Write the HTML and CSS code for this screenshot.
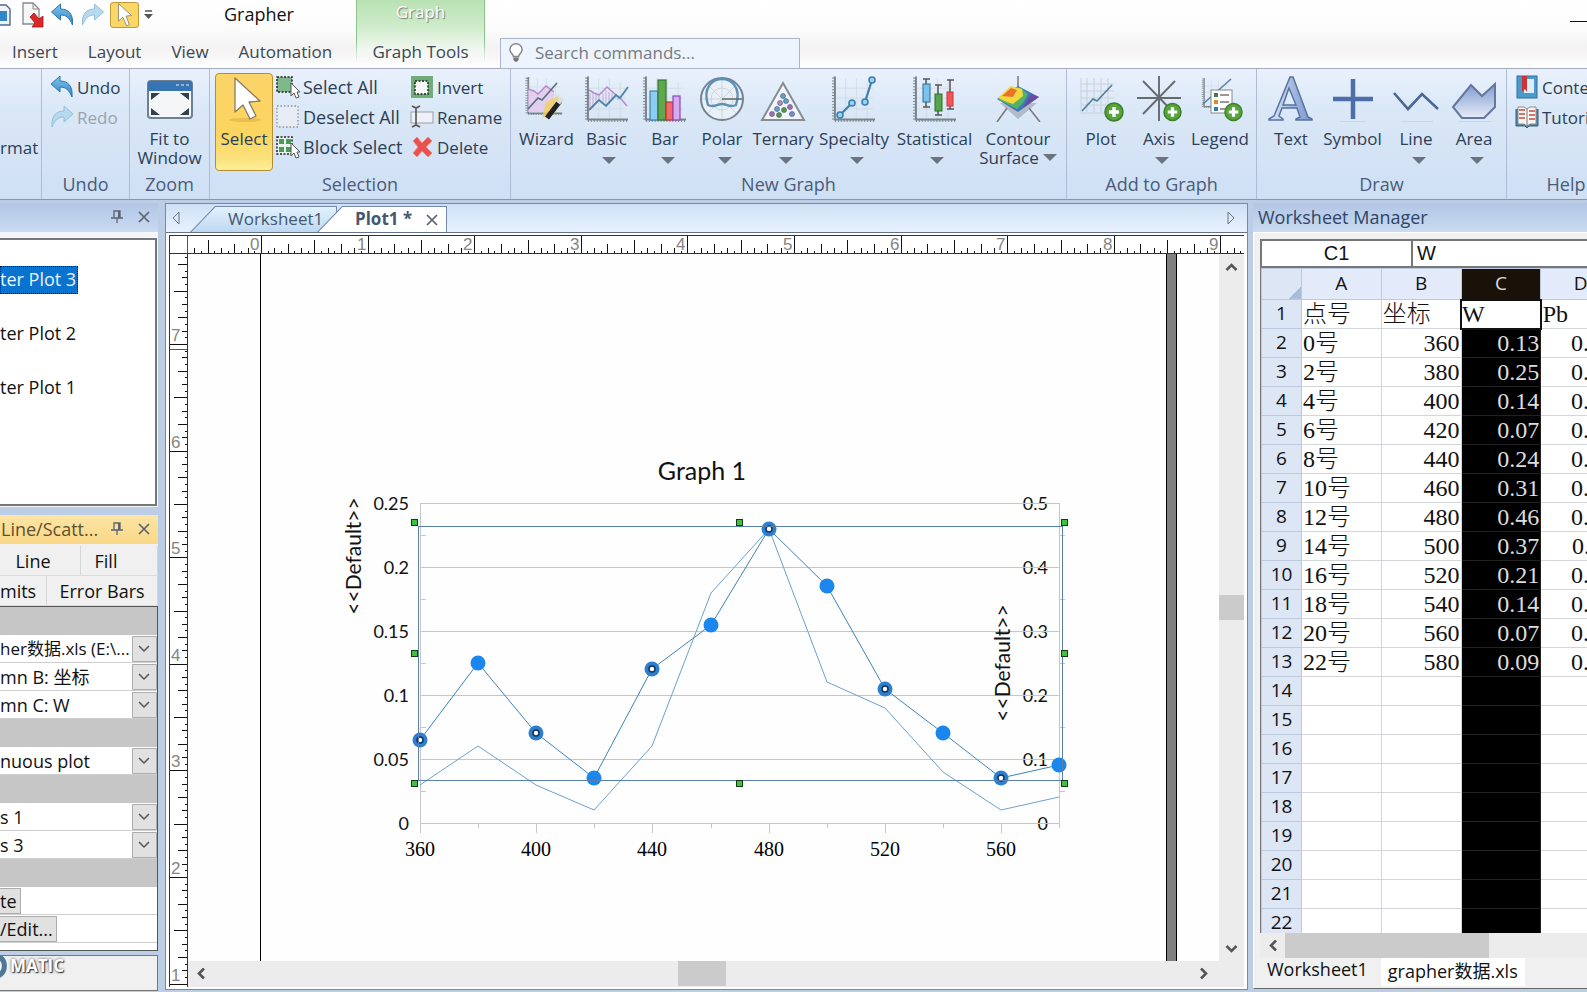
FILE: index.html
```
<!DOCTYPE html>
<html lang="en">
<head>
    <meta charset="UTF-8">
    <title>Grapher</title>
    <link rel="stylesheet" href="styles.css">
</head>
<body>
    <!-- shared shapes -->
    <svg class="defs" width="0" height="0" aria-hidden="true">
        <defs>
            <linearGradient id="blueFill" x1="0" y1="0" x2="0" y2="1">
                <stop offset="0" stop-color="#7fc4ea"/>
                <stop offset="1" stop-color="#2f86c4"/>
            </linearGradient>
            <linearGradient id="areaFill" x1="0" y1="0" x2="0" y2="1">
                <stop offset="0" stop-color="#7f9ad0"/>
                <stop offset="1" stop-color="#e8ecf8"/>
            </linearGradient>
            <linearGradient id="textFill" x1="0" y1="0" x2="1" y2="0">
                <stop offset="0" stop-color="#dbe5f6"/>
                <stop offset="1" stop-color="#7795cf"/>
            </linearGradient>
            <symbol id="undo" viewBox="0 0 24 24">
                <path d="M1 9 L10 1 V6 C18 6 23 11 22 22 C19 15 16 12 10 12 V17 Z" fill="url(#blueFill)" stroke="#2b76ad" stroke-width="1"/>
            </symbol>
            <symbol id="redo" viewBox="0 0 24 24">
                <path d="M23 9 L14 1 V6 C6 6 1 11 2 22 C5 15 8 12 14 12 V17 Z" fill="#b5d9ee" stroke="#95c0dc" stroke-width="1"/>
            </symbol>
            <symbol id="cursor" viewBox="0 0 28 44">
                <path d="M2 1 L2 33 L10 26 L17 42 L22 40 L16 24 L26 23 Z" fill="#fff" stroke="#8a8378" stroke-width="1.6" stroke-linejoin="round"/>
            </symbol>
            <symbol id="axes" viewBox="0 0 44 46">
                <path d="M14 2V44M25 2V44M36 6V44M4 12H42M4 22H42M4 33H42" stroke="#d3dce6" fill="none"/>
                <path d="M3 0V44H44" fill="none" stroke="#7b838b" stroke-width="2"/>
                <path d="M1 1V44" stroke="#7b838b" stroke-width="3" stroke-dasharray="1 2"/>
                <path d="M3 45H44" stroke="#7b838b" stroke-width="3" stroke-dasharray="1 2"/>
            </symbol>
            <symbol id="plus" viewBox="0 0 20 20">
                <circle cx="10" cy="10" r="9" fill="#57a53a" stroke="#3f7d2b" stroke-width="1.5"/>
                <path d="M10 5V15M5 10H15" stroke="#fff" stroke-width="3.4"/>
            </symbol>
            <symbol id="pin" viewBox="0 0 12 14">
                <path d="M3 8V1H9V8M0 8H12M6 8V13" fill="none" stroke="#5a6470" stroke-width="1.3"/>
                <path d="M8 1V8" stroke="#5a6470" stroke-width="2"/>
            </symbol>
            <symbol id="close" viewBox="0 0 12 12">
                <path d="M1 1L11 11M11 1L1 11" fill="none" stroke="#5a6470" stroke-width="1.7"/>
            </symbol>
            <symbol id="chev" viewBox="0 0 12 12">
                <path d="M1 9L6 4L11 9" fill="none" stroke="#555" stroke-width="2.6"/>
            </symbol>
        </defs>
    </svg>

    <header class="titlebar">
        <div class="window-col">
            <div class="quick">
                <button aria-label="Save"><svg width="14" height="24" viewBox="0 0 14 24"><path d="M0 2H6L10 6V22H0" fill="#eef4fa" stroke="#50698a" stroke-width="1.4"/><path d="M0 8H7V18H0" fill="#2f86c8"/></svg></button>
                <button aria-label="Export"><svg width="24" height="26" viewBox="0 0 24 26"><path d="M2 1H12L18 7V22H2Z" fill="#f6f6f8" stroke="#85888f" stroke-width="1.3"/><path d="M12 1V7H18" fill="none" stroke="#85888f"/><path d="M9 15L13 11L18 17L22 14V25H11L14 21Z" fill="#dc2727" stroke="#9f1818" stroke-width=".8"/></svg></button>
                <button aria-label="Undo"><svg width="25" height="24"><use href="#undo"/></svg></button>
                <button aria-label="Redo"><svg width="25" height="24"><use href="#redo"/></svg></button>
                <button class="active" aria-label="Select"><svg width="18" height="24"><use href="#cursor"/></svg></button>
                <button aria-label="More"><svg width="9" height="10" viewBox="0 0 9 10"><path d="M1 1H8" stroke="#555" stroke-width="1.5"/><path d="M0 4H9L4.500 9Z" fill="#555"/></svg></button>
            </div>
            <nav class="tabs">
                <a href="#insert">Insert</a>
                <a href="#layout">Layout</a>
                <a href="#view">View</a>
                <a href="#automation">Automation</a>
            </nav>
        </div>
        <div class="app-name">Grapher</div>
        <div class="context-tab">
            <span>Graph</span>
            <a href="#tools">Graph Tools</a>
        </div>
        <label class="search">
            <svg width="14" height="20" viewBox="0 0 16 22"><path d="M5 15C5 12 1 11 1 7A7 6.500 0 0 1 15 7C15 11 11 12 11 15Z" fill="#fff" stroke="#888" stroke-width="1.7"/><path d="M5 16H11V19L9 21H7L5 19Z" fill="#777"/></svg>
            <input type="text" placeholder="Search commands..." aria-label="Search commands">
        </label>
        <button class="minimize" aria-label="Minimize"></button>
    </header>

    <section class="ribbon">
        <div class="group g-format">
            <div class="items"><span class="cut">rmat</span></div>
        </div>
        <div class="group g-undo">
            <div class="items rows">
                <button><svg width="24" height="24"><use href="#undo"/></svg>Undo</button>
                <button disabled><svg width="24" height="24"><use href="#redo"/></svg>Redo</button>
            </div>
            <h2>Undo</h2>
        </div>
        <div class="group g-zoom">
            <div class="items">
                <button class="big">
                    <svg width="46" height="46" viewBox="0 0 46 46"><rect x="1" y="5" width="44" height="37" rx="3" fill="#f8fafc" stroke="#6d7f93" stroke-width="2"/><path d="M1 15V8Q1 5 4 5H42Q45 5 45 8V15Z" fill="#3774b4"/><path d="M29 9H42" stroke="#a9c9e8" stroke-width="1.500" stroke-dasharray="3 2"/><rect x="3" y="15" width="40" height="25" fill="#f4f6f8"/><path d="M4 17H13L4 24ZM42 17H33L42 24ZM4 39H13L4 32ZM42 39H33L42 32Z" fill="#35404d"/></svg>
                    <span>Fit to<br>Window</span>
                </button>
            </div>
            <h2>Zoom</h2>
        </div>
        <div class="group g-selection">
            <div class="items">
                <button class="big active">
                    <svg width="46" height="46" viewBox="0 0 46 46"><ellipse cx="24" cy="44" rx="16" ry="2" fill="#d9a93a" opacity=".5"/><path d="M14 2V36L22 29L29 43L35 40L28 26L39 25Z" fill="#fff" stroke="#8a7a60" stroke-width="1.300" stroke-linejoin="round"/></svg>
                    <span>Select</span>
                </button>
                <div class="rows">
                    <button><svg width="24" height="24" viewBox="0 0 24 24"><rect x="1" y="2" width="15" height="15" fill="#7db98b" stroke="#222" stroke-width="1.500" stroke-dasharray="2 1.500"/><path d="M15 8V21L18 18L20 23L23 22L21 17H24Z" fill="#fff" stroke="#555"/></svg>Select All</button>
                    <button><svg width="24" height="24" viewBox="0 0 24 24"><rect x="1" y="1" width="21" height="21" fill="#e8edf5" stroke="#8b8f98" stroke-width="1.300" stroke-dasharray="1.500 2"/></svg>Deselect All</button>
                    <button><svg width="24" height="24" viewBox="0 0 24 24"><rect x="1" y="2" width="15" height="17" fill="#eaf3ec" stroke="#222" stroke-width="1.500" stroke-dasharray="2 1.500"/><path d="M3 4H8V9H3ZM10 4H15V9H10ZM3 12H8V17H3ZM10 12H15V17H10Z" fill="#4b9a55"/><path d="M15 8V21L18 18L20 23L23 22L21 17H24Z" fill="#fff" stroke="#555"/></svg>Block Select</button>
                </div>
                <div class="rows">
                    <button><svg width="24" height="24" viewBox="0 0 24 24"><rect x="1" y="1" width="22" height="22" fill="#6fae78"/><rect x="5" y="6" width="13" height="13" fill="#f7faf7" stroke="#222" stroke-width="1.500" stroke-dasharray="2 1.500"/></svg>Invert</button>
                    <button><svg width="24" height="24" viewBox="0 0 24 24"><rect x="1" y="7" width="22" height="11" fill="#eef1f6" stroke="#9a9fa8"/><path d="M2 1L6 3L10 1M6 3V20M2 22L6 20L10 22" fill="none" stroke="#555" stroke-width="1.600"/></svg>Rename</button>
                    <button><svg width="24" height="24" viewBox="0 0 24 24"><path d="M3 6L7 2L12 8L18 2L22 6L16 12L22 18L18 22L12 16L7 22L3 18L8 12Z" fill="#e9504e" stroke="#f08b88"/></svg>Delete</button>
                </div>
            </div>
            <h2>Selection</h2>
        </div>
        <div class="group g-new">
            <div class="items">
                <button class="big">
                    <svg width="46" height="46" viewBox="0 0 46 46"><svg x="1" y="1" width="38" height="38"><use href="#axes"/></svg><path d="M4 13L10 15L14 18L22 10L30 16V36H4Z" fill="#e6c3ea" opacity=".7"/><path d="M4 13L10 15L14 18L22 10L30 16" fill="none" stroke="#b887cc" stroke-width="1.400"/><path d="M18 42L22 26L34 20L38 26L30 38Z" fill="#f3cf5a" opacity=".8"/><path d="M4 33L14 22L18 24L33 7" fill="none" stroke="#5b7186" stroke-width="1.700"/><path d="M23 42L36 25" stroke="#222" stroke-width="5"/><path d="M34 27L38 22" stroke="#ddd" stroke-width="5"/></svg>
                    <span>Wizard</span>
                </button>
                <button class="big drop">
                    <svg width="46" height="46" viewBox="0 0 46 46"><svg x="1" y="0" width="43" height="46"><use href="#axes"/></svg><path d="M5 14L10 17L15 19L23 11L32 19L38 24L43 30" fill="none" stroke="#b48ac8" stroke-width="1.500"/><path d="M6 17V34M9 17V32M12 18V28M15 19V25M19 17V27M22 14V29M25 16V28M28 17V24M31 19V22M34 20V24" stroke="#c9a6da"/><path d="M5 34L15 24L22 30L32 19L36 22L44 11" fill="none" stroke="#4e86a6" stroke-width="1.900"/></svg>
                    <span>Basic</span>
                </button>
                <button class="big drop">
                    <svg width="46" height="46" viewBox="0 0 46 46"><svg x="1" y="0" width="43" height="46"><use href="#axes"/></svg><g stroke-width="1.200"><rect x="8" y="15" width="8" height="29" fill="#8ccdf2" stroke="#3f82ad"/><rect x="16" y="4" width="8" height="40" fill="#5fa84d" stroke="#33752d"/><rect x="24" y="26" width="7" height="18" fill="#f16a6a" stroke="#c62e35"/><rect x="31" y="20" width="7" height="24" fill="#d7aaf0" stroke="#8848b5"/></g></svg>
                    <span>Bar</span>
                </button>
                <button class="big drop">
                    <svg width="46" height="46" viewBox="0 0 46 46"><circle cx="23" cy="23" r="21" fill="#e9f0f8" stroke="#75828f" stroke-width="2"/><path d="M23 3V43M3 23H43M9 9L37 37M37 9L9 37" stroke="#ccd5df"/><circle cx="23" cy="23" r="11" fill="none" stroke="#ccd5df"/><path d="M9 29C3 10 15 3 23 3C31 3 43 10 37 29C31 32 28 28 23 28C18 28 15 32 9 29Z" fill="none" stroke="#5b90b7" stroke-width="2.400"/><path d="M23 23H43" stroke="#666" stroke-width="1.500"/></svg>
                    <span>Polar</span>
                </button>
                <button class="big drop">
                    <svg width="46" height="46" viewBox="0 0 46 46"><path d="M23 7L44 44H2Z" fill="#f1f5fa" stroke="#858c94" stroke-width="2"/><g stroke="#555" stroke-width=".6"><circle cx="23" cy="20" r="2.500" fill="#57a3d6"/><circle cx="20" cy="27" r="2.500" fill="#a98ad2"/><circle cx="26" cy="25" r="2.500" fill="#57a3d6"/><circle cx="30" cy="31" r="2.500" fill="#a06cc4"/><circle cx="17" cy="33" r="2.500" fill="#57a3d6"/><circle cx="24" cy="34" r="2.500" fill="#4a9a45"/><circle cx="12" cy="38" r="2.500" fill="#a06cc4"/><circle cx="19" cy="39" r="2.500" fill="#4a9a45"/><circle cx="32" cy="38" r="2.500" fill="#6c8fd6"/></g></svg>
                    <span>Ternary</span>
                </button>
                <button class="big drop">
                    <svg width="46" height="46" viewBox="0 0 46 46"><svg x="1" y="0" width="43" height="46"><use href="#axes"/></svg><path d="M9 39L21 27M34 26L41 4" stroke="#3b7fae" stroke-width="2.200"/><g fill="#9bd2f2" stroke="#3b7fae" stroke-width="1.600"><circle cx="9" cy="39" r="3"/><circle cx="21" cy="27" r="3"/><circle cx="34" cy="26" r="3"/><circle cx="41" cy="4" r="3"/></g></svg>
                    <span>Specialty</span>
                </button>
                <button class="big drop">
                    <svg width="46" height="46" viewBox="0 0 46 46"><svg x="1" y="0" width="43" height="46"><use href="#axes"/></svg><path d="M11 3H18M14 3V31M11 31H18M23 9H30M26 9V39M23 39H30M35 4H42M38 4V33M35 33H42" fill="none" stroke="#555" stroke-width="1.500"/><rect x="11" y="8" width="7" height="18" fill="#79c3f0" stroke="#33688e"/><rect x="23" y="18" width="7" height="17" fill="#58a44c" stroke="#2e6d28"/><rect x="35" y="16" width="6" height="14" fill="#ef5757" stroke="#c33"/></svg>
                    <span>Statistical</span>
                </button>
                <button class="big">
                    <svg width="46" height="46" viewBox="0 0 46 46"><path d="M23 0V12M12 32L2 46M34 32L45 46" stroke="#777" stroke-width="1.500"/><path d="M5 27L23 43L42 27Z" fill="#8c8c99" opacity=".5"/><path d="M2 23L23 36L44 21L23 10Z" fill="#3d79b8"/><path d="M4 24L15 11L26 12L33 18L28 27L22 33Z" fill="#55b06a"/><path d="M3 22L16 10L27 13L28 20L18 28L12 26Z" fill="#f3d83b"/><path d="M7 20L16 12L22 14L18 21Z" fill="#e8722c"/><path d="M28 32L44 21L36 18Z" fill="#6d4a9e"/></svg>
                    <span>Contour<br>Surface<i class="tri"></i></span>
                </button>
            </div>
            <h2>New Graph</h2>
        </div>
        <div class="group g-add">
            <div class="items">
                <button class="big">
                    <svg width="46" height="46" viewBox="0 0 46 46"><path d="M3 2V37H38M9 2V36M16 2V36M23 2V36M30 2V36M3 8H36M3 15H36M3 22H36M3 29H36" fill="none" stroke="#c9d0d8"/><path d="M4 35L15 23L19 25L34 9" fill="none" stroke="#4f7d9d" stroke-width="1.600"/><svg x="26" y="26" width="20" height="20"><use href="#plus"/></svg></svg>
                    <span>Plot</span>
                </button>
                <button class="big drop">
                    <svg width="46" height="46" viewBox="0 0 46 46"><path d="M23 0V45M1 22H45M7 5L39 38M39 5L7 38" stroke="#666b70" stroke-width="1.900"/><svg x="27" y="26" width="19" height="20"><use href="#plus"/></svg></svg>
                    <span>Axis</span>
                </button>
                <button class="big">
                    <svg width="46" height="46" viewBox="0 0 46 46"><svg x="3" y="2" width="33" height="30"><use href="#axes"/></svg><path d="M6 28L34 3" stroke="#5a83a3" stroke-width="1.600"/><rect x="14" y="14" width="21" height="23" fill="#fff" stroke="#888"/><path d="M17 17H21V21H17Z" fill="#3d7f4b"/><path d="M17 24H21V28H17Z" fill="#e08a2b"/><path d="M17 31H21V35H17Z" fill="#2f78b4"/><path d="M23 19H32M23 26H32M23 33H32" stroke="#777" stroke-width="1.500"/><svg x="27" y="26" width="19" height="20"><use href="#plus"/></svg></svg>
                    <span>Legend</span>
                </button>
            </div>
            <h2>Add to Graph</h2>
        </div>
        <div class="group g-draw">
            <div class="items">
                <button class="big">
                    <svg width="46" height="46" viewBox="0 0 46 46"><path d="M22 1H25L40 41L44 43V44H28V43L32 41L29 32H14L11 40L15 43V44H1V43L6 40ZM21 12L15 29H28Z" fill="url(#textFill)" stroke="#5873a0" stroke-width="1.500" fill-rule="evenodd"/></svg>
                    <span>Text</span>
                </button>
                <button class="big">
                    <svg width="46" height="46" viewBox="0 0 46 46"><path d="M23 3V43M3 23H43" stroke="#4d6ea8" stroke-width="4.500"/><path d="M10 46H36" stroke="#b9c4d6"/></svg>
                    <span>Symbol</span>
                </button>
                <button class="big drop">
                    <svg width="46" height="46" viewBox="0 0 46 46"><path d="M1 17L15 33L29 18L45 33" fill="none" stroke="#4c6594" stroke-width="2.600"/><path d="M8 46H40" stroke="#b9c4d6"/></svg>
                    <span>Line</span>
                </button>
                <button class="big drop">
                    <svg width="46" height="46" viewBox="0 0 46 46"><path d="M2 31L20 9L31 20L44 8V31L33 42H11Z" fill="url(#areaFill)" stroke="#64779e" stroke-width="2"/><path d="M8 46H40" stroke="#b9c4d6"/></svg>
                    <span>Area</span>
                </button>
            </div>
            <h2>Draw</h2>
        </div>
        <div class="group g-help">
            <div class="items rows">
                <button><svg width="24" height="24" viewBox="0 0 24 24"><rect x="2" y="1" width="20" height="22" fill="#4a9ad0" stroke="#2c6e9f"/><rect x="9" y="4" width="10" height="14" fill="#dceefa"/><path d="M7 1H12V17L10 14L7 17Z" fill="#c93434"/></svg>Contents</button>
                <button><svg width="24" height="24" viewBox="0 0 24 24"><path d="M1 4V21H10L12 23L14 21H23V4" fill="#4f86a8" stroke="#355f7c"/><path d="M3 2H9L12 4L15 2H21V19H15L12 21L9 19H3Z" fill="#fbf8f4" stroke="#8b8b8b"/><path d="M4 5H10M14 6H20M4 9H10M14 10H20M4 13H10M14 14H20" stroke="#c44a3c" stroke-width="1.500"/><path d="M12 4V21" stroke="#777"/></svg>Tutorials</button>
            </div>
            <h2>Help</h2>
        </div>
    </section>

    <main>
        <aside class="left">
            <section class="objects">
                <div class="panel-head">
                    <span></span>
                    <button aria-label="Pin"><svg width="12" height="14"><use href="#pin"/></svg></button>
                    <button aria-label="Close"><svg width="12" height="12"><use href="#close"/></svg></button>
                </div>
                <div class="tree-box">
                    <ul>
                        <li class="selected">ter Plot 3</li>
                        <li>ter Plot 2</li>
                        <li>ter Plot 1</li>
                    </ul>
                </div>
            </section>
            <section class="props">
                <div class="panel-head">
                    <span>Line/Scatt...</span>
                    <button aria-label="Pin"><svg width="12" height="14"><use href="#pin"/></svg></button>
                    <button aria-label="Close"><svg width="12" height="12"><use href="#close"/></svg></button>
                </div>
                <div class="prop-tabs first"><button>Line</button><button>Fill</button></div>
                <div class="prop-tabs second"><button>mits</button><button>Error Bars</button></div>
                <div class="prop-list">
                    <div class="band"></div>
                    <select aria-label="Worksheet"><option>her数据.xls (E:\...</option></select>
                    <select aria-label="X values"><option>mn B: 坐标</option></select>
                    <select aria-label="Y values"><option>mn C: W</option></select>
                    <div class="band"></div>
                    <select aria-label="Plot type"><option>nuous plot</option></select>
                    <div class="band"></div>
                    <select aria-label="X axis"><option>s 1</option></select>
                    <select aria-label="Y axis"><option>s 3</option></select>
                    <div class="band"></div>
                    <div class="row"><button>te</button></div>
                    <div class="row"><button>/Edit...</button></div>
                </div>
            </section>
            <div class="status">
                <svg width="8" height="28" viewBox="0 0 8 28"><path d="M-2 0A11 11 0 0 1 -2 20" fill="none" stroke="#4d7897" stroke-width="5"/></svg>
                <span>MATIC</span>
            </div>
        </aside>

        <section class="document">
            <div class="doc-tabs">
                <button class="scroll" aria-label="Scroll left"><svg width="8" height="14" viewBox="0 0 8 14"><path d="M7 1V13L1 7Z" fill="none" stroke="#6d7783"/></svg></button>
                <button class="tab"><span>Worksheet1</span></button>
                <button class="tab current"><span>Plot1 *</span><svg width="12" height="12"><use href="#close"/></svg></button>
                <button class="scroll end" aria-label="Scroll right"><svg width="8" height="14" viewBox="0 0 8 14"><path d="M1 1V13L7 7Z" fill="none" stroke="#6d7783"/></svg></button>
            </div>
            <div class="workspace">
                <div class="corner"></div>
                <svg class="ruler-h" id="rulerH"></svg>
                <svg class="ruler-v" id="rulerV"></svg>
                <svg class="canvas">
                    <path d="M72.500 0V1000" stroke="#000"/>
                    <rect x="978" y="0" width="11" height="1000" fill="#808080"/>
                    <path d="M978.500 0V1000M988.500 0V1000" stroke="#000"/>
                    <text class="graph-title" x="514" y="226">Graph 1</text>
                    <text class="axis-title" transform="translate(173 302) rotate(-90)">&lt;&lt;Default&gt;&gt;</text>
                    <g transform="translate(232 249)">
                        <path class="grid" d="M0 .5H640M0 64.500H640M0 128.500H640M0 192.500H640M0 256.500H640M0 320.500H640M.5 0V330M639.500 0V325"/>
                        <path class="grid" d="M0 32.500H6M0 96.500H6M0 160.500H6M0 224.500H6M0 288.500H6M639 32.500H645M639 96.500H645M639 160.500H645M639 224.500H645M639 288.500H645"/>
                        <path class="grid" d="M58.500 320V325M116.500 320V330M174.500 320V325M232.500 320V330M291.500 320V325M349.500 320V330M407.500 320V325M465.500 320V330M523.500 320V325M581.500 320V330"/>
                        <g class="y-labels">
                            <text x="-11" y="7">0.25</text>
                            <text x="-11" y="71">0.2</text>
                            <text x="-11" y="135">0.15</text>
                            <text x="-11" y="199">0.1</text>
                            <text x="-11" y="263">0.05</text>
                            <text x="-11" y="327">0</text>
                            <text x="628" y="7">0.5</text>
                            <text x="628" y="71">0.4</text>
                            <text x="628" y="135">0.3</text>
                            <text x="628" y="199">0.2</text>
                            <text x="628" y="263">0.1</text>
                            <text x="628" y="327">0</text>
                        </g>
                        <path class="grid" d="M598 .5H640M598 64.500H640M598 128.500H640M598 192.500H640M598 256.500H640M598 320.500H640"/>
                        <g class="x-labels">
                            <text x="0" y="353">360</text>
                            <text x="116" y="353">400</text>
                            <text x="232" y="353">440</text>
                            <text x="349" y="353">480</text>
                            <text x="465" y="353">520</text>
                            <text x="581" y="353">560</text>
                        </g>
                        <polyline class="thin" points="0,282 58,243 116,282 174,307 232,243 291,90 349,26 407,179 465,205 523,269 581,307 639,294"/>
                        <polyline class="series" points="0,237 58,160 116,230 174,275 232,166 291,122 349,26 407,83 465,186 523,230 581,275 639,262"/>
                        <g id="points"></g>
                        <text class="axis-title" transform="translate(590 160) rotate(-90)">&lt;&lt;Default&gt;&gt;</text>
                        <rect x="-1.500" y="23.500" width="644" height="254" fill="none" stroke="#5b7fae"/>
                        <g id="handles"></g>
                    </g>
                </svg>
                <div class="vscroll">
                    <button aria-label="Up"><svg width="13" height="12"><use href="#chev"/></svg></button>
                    <div class="thumb"></div>
                    <button aria-label="Down"><svg class="down" width="13" height="12"><use href="#chev"/></svg></button>
                </div>
                <div class="hscroll">
                    <button aria-label="Left"><svg class="to-left" width="12" height="13"><use href="#chev"/></svg></button>
                    <div class="thumb"></div>
                    <button aria-label="Right"><svg class="to-right" width="12" height="13"><use href="#chev"/></svg></button>
                </div>
            </div>
        </section>

        <aside class="right">
            <div class="panel-head"><span>Worksheet Manager</span></div>
            <div class="sheet-box">
                <div class="cell-bar">
                    <input class="cell-name" value="C1" aria-label="Cell">
                    <input class="cell-value" value="W" aria-label="Value">
                </div>
                <div class="grid-box">
                    <table>
                        <thead>
                            <tr><th class="all"></th><th>A</th><th>B</th><th class="sel">C</th><th>D</th></tr>
                        </thead>
                        <tbody id="sheet"></tbody>
                    </table>
                </div>
                <div class="sheet-scroll">
                    <button aria-label="Left"><svg class="to-left" width="12" height="13"><use href="#chev"/></svg></button>
                    <div class="thumb"></div>
                </div>
                <div class="sheet-tabs">
                    <button>Worksheet1</button>
                    <button class="current">grapher数据.xls</button>
                </div>
            </div>
        </aside>
    </main>
    <script src="app.js"></script>
</body>
</html>
```
FILE: styles.css
```
* {
    box-sizing: border-box;
}

body {
    margin: 0;
    height: 100vh;
    display: flex;
    flex-direction: column;
    overflow: hidden;
    background: #bccde6;
    color: #111;
    font-family: "Open Sans", "Noto Sans CJK SC", sans-serif;
    font-size: 18px;
    line-height: 20px;
}

button, input, select {
    font: inherit;
    color: inherit;
    border: 0;
    margin: 0;
    padding: 0;
    background: none;
}

svg {
    display: block;
    flex: none;
}

.defs {
    position: absolute;
}

.to-left { transform: rotate(-90deg); }
.to-right { transform: rotate(90deg); }
.down { transform: rotate(180deg); }

/* title bar */
.titlebar {
    height: 69px;
    flex: none;
    display: flex;
    border-bottom: 1px solid #a3acbc;
    background: linear-gradient(#fff 0, #fdfcfd 30px, #f4f2f2 48px, #fdfdfd 66px);
    color: #3c4654;
    position: relative;
}

.window-col {
    width: 356px;
    display: flex;
    flex-direction: column;
}

.quick {
    height: 38px;
    display: flex;
    align-items: flex-start;
    gap: 5px;
    padding-top: 2px;
}

.quick button {
    height: 26px;
    display: flex;
    align-items: center;
    justify-content: center;
}

.quick button:first-child {
    width: 16px;
    justify-content: flex-start;
}

.quick .active {
    width: 29px;
    border: 1px solid #c09a3a;
    border-radius: 3px;
    background: #fbd765;
}

.app-name {
    position: absolute;
    left: 224px;
    top: 4px;
    color: #111;
    font-size: 18px;
}

.tabs {
    display: flex;
    gap: 30px;
    padding: 4px 0 0 12px;
    font-size: 17px;
}

a {
    color: inherit;
    text-decoration: none;
}

.context-tab {
    width: 129px;
    display: flex;
    flex-direction: column;
    align-items: center;
    gap: 20px;
    padding-top: 2px;
    border: 1px solid;
    border-width: 0 1px;
    border-image: linear-gradient(#8cc489, #8cc489 40px, transparent 62px) 1;
    background: linear-gradient(#b9e2b4, #cdebc9 25px, #f2f8f1 50px, transparent 60px);
    font-size: 17px;
    white-space: nowrap;
}

.context-tab span {
    color: #fff;
    text-shadow: 1px 1px 1px #777;
}

.search {
    width: 300px;
    height: 31px;
    margin: 38px 0 0 15px;
    display: flex;
    align-items: center;
    gap: 12px;
    padding: 0 8px 2px;
    border: 1px solid #a9b6c9;
    background: #eef4fd;
    font-size: 17px;
}

.search input {
    flex: 1;
    min-width: 0;
    outline: 0;
}

.search input::placeholder {
    color: #747a82;
    opacity: 1;
}

.minimize {
    width: 17px;
    height: 22px;
    margin-left: auto;
    border-bottom: 1px solid #111;
}

/* ribbon */
.ribbon {
    height: 131px;
    flex: none;
    display: flex;
    border-bottom: 1px solid #8095b8;
    background: linear-gradient(#eaf1fd, #dae8f7 40px, #d4e3f5 90px, #cfe0f5);
    color: #2c3e55;
    overflow: hidden;
    font-size: 17px;
    line-height: 19px;
}

.group {
    flex: none;
    display: flex;
    flex-direction: column;
    border-right: 1px solid #aebdd3;
    white-space: nowrap;
}

.group h2 {
    margin: 0;
    font-size: 18px;
    line-height: 20px;
    font-weight: normal;
    text-align: center;
    color: #4a5c78;
}

.items {
    height: 105px;
    display: flex;
    padding-top: 4px;
}

.rows {
    display: flex;
    flex-direction: column;
}

.rows button {
    height: 30px;
    display: flex;
    align-items: center;
    gap: 3px;
    padding-bottom: 2px;
}

.rows button:disabled {
    color: #9aa3ae;
}

.items.rows {
    padding-left: 8px;
}

.big {
    height: 98px;
    display: flex;
    flex-direction: column;
    align-items: center;
    gap: 7px;
    padding-top: 3px;
}

.big.active {
    width: 58px;
    border: 1px solid #b98d2c;
    border-radius: 4px;
    padding-top: 2px;
    background: linear-gradient(#fbd46a, #fbd55f 60px, #fbe27c 85px, #fdf09a);
}

.drop::after, .tri {
    content: "";
    border: 7px solid transparent;
    border-top: 7px solid #6a737f;
    border-bottom: 0;
}

.drop::after {
    margin: 2px 0 0 5px;
}

.tri {
    display: inline-block;
    margin: 0 0 3px 4px;
}

.g-format { width: 42px; }
.g-undo { width: 88px; }
.g-zoom { width: 80px; }
.g-selection { width: 301px; }
.g-new { width: 556px; }
.g-add { width: 190px; }
.g-draw { width: 250px; }
.g-help { width: 118px; border: 0; }

.cut {
    padding: 65px 0 0 0;
}

.g-zoom .items {
    justify-content: center;
}

.g-selection .items {
    padding-left: 5px;
}

.g-selection .rows:nth-child(2) {
    width: 137px;
    padding-left: 3px;
    font-size: 18px;
}

.g-new .items, .g-add .items, .g-draw .items {
    display: grid;
}

.g-new .items {
    grid-template-columns: 61px 59px 58px 56px 66px 76px 85px 82px;
    padding-left: 5px;
}

.g-add .items {
    grid-template-columns: 58px 58px 64px;
    padding-left: 5px;
}

.g-draw .items {
    grid-template-columns: 58px 65px 62px 54px;
    padding-left: 5px;
}

/* main area */
main {
    flex: 1;
    min-height: 0;
    display: flex;
    padding-top: 3px;
}

.panel-head {
    height: 29px;
    flex: none;
    display: flex;
    align-items: center;
    gap: 14px;
    padding: 0 7px 1px 0;
    background: linear-gradient(#b2c6e5, #c9daf1);
    color: #2f4565;
}

.panel-head span {
    flex: 1;
    white-space: nowrap;
}

.panel-head button {
    width: 13px;
}

.left {
    width: 158px;
    flex: none;
    display: flex;
    flex-direction: column;
    overflow: hidden;
}

.tree-box {
    height: 275px;
    padding: 6px 1px 1px 0;
    background: #f4f6fa;
}

.objects ul {
    height: 100%;
    margin: 0;
    padding: 26px 0 0;
    list-style: none;
    background: #fff;
    border: 2px solid #777;
    border-left: 0;
}

.objects li {
    width: max-content;
    height: 28px;
    margin-bottom: 26px;
    padding: 3px 2px 4px 0;
}

.objects .selected {
    background: #0a73cf;
    color: #e8f4ff;
    outline: 1px dotted #111;
    outline-offset: -1px;
}

.props {
    margin-top: 8px;
    background: #f0f0f0;
}

.props .panel-head {
    padding-left: 1px;
    gap: 14px;
    background: linear-gradient(#fde5a6, #f9d886);
    color: #5c5130;
}

.props .panel-head span {
    min-width: 0;
}

.prop-tabs {
    height: 30px;
    display: flex;
    border-bottom: 1px solid #dcdcdc;
}

.prop-tabs.first {
    margin-top: 2px;
}

.prop-tabs button {
    border-right: 1px solid #d6d6d6;
    white-space: nowrap;
}

.first button:first-child {
    width: 81px;
    padding-right: 14px;
}

.first button:last-child {
    width: 77px;
    padding-right: 26px;
}

.second button:first-child {
    width: 47px;
    padding-right: 15px;
    text-align: right;
}

.second button:last-child {
    width: 111px;
}

.prop-list {
    height: 345px;
    border: 1px solid #555;
    border-left: 0;
    background: #fff;
}

.band {
    height: 28px;
    background: #c6c6c6;
}

.prop-list select {
    appearance: none;
    display: block;
    width: 100%;
    height: 28px;
    line-height: 26px;
    padding-right: 27px;
    border-bottom: 1px solid #d0d0d0;
    background:
        url("data:image/svg+xml,%3Csvg xmlns='http://www.w3.org/2000/svg' width='25' height='26'%3E%3Cpath d='M.5.5H24.500V25.500H.5Z' fill='%23e1e1e1' stroke='%23adadad'/%3E%3Cpath d='M7 10L12 15L17 10' fill='none' stroke='%23555' stroke-width='1.500'/%3E%3C/svg%3E") right bottom no-repeat #fff;
}

.prop-list select:first-of-type {
    font-size: 17px;
}

.row {
    height: 28px;
    border-bottom: 1px solid #d0d0d0;
}

.row button {
    height: 26px;
    margin-top: 1px;
    padding-right: 3px;
    border: 1px solid #adadad;
    border-left: 0;
    background: #e1e1e1;
}

.status {
    flex: 1;
    margin: 4px 0 1px;
    display: flex;
    align-items: flex-start;
    gap: 2px;
    border: 1px solid #777;
    border-left: 0;
    background: #f0f0f0;
}

.status span {
    color: #fff;
    font-weight: bold;
    font-size: 17px;
    text-shadow: 1px 1px 1px #333, 0 0 3px #555;
}

/* document */
.document {
    flex: 1;
    min-width: 0;
    margin: 0 5px 2px 7px;
    display: flex;
    flex-direction: column;
    border: 1px solid #7389ae;
    background: #fff;
}

.doc-tabs {
    height: 29px;
    flex: none;
    display: flex;
    align-items: flex-end;
    border-bottom: 1px solid #64748c;
    background: linear-gradient(#cfe0f6, #e8f2fe);
}

.scroll {
    height: 28px;
    padding: 0 6px;
}

.scroll.end {
    margin-left: auto;
    padding-right: 12px;
}

.tab {
    height: 26px;
    display: flex;
    align-items: center;
    background: #7389ae;
    clip-path: polygon(0 100%, 25px 0, 100% 0, 100% 100%);
    width: 147px;
    margin-left: 4px;
    color: #44586f;
}

.tab span {
    height: 26px;
    flex: 1;
    line-height: 23px;
    margin: 1px 1px 0;
    background: linear-gradient(#e2f2ff, #bcd7f0);
    clip-path: polygon(0 100%, 25px 0, 100% 0, 100% 100%);
    text-align: left;
    padding-left: 37px;
    font-size: 17px;
}

.tab.current {
    width: 130px;
    margin-left: -20px;
    position: relative;
    font-weight: bold;
}

.tab.current span {
    background: #fff;
}

.tab.current svg {
    position: absolute;
    right: 9px;
    top: 8px;
}

.workspace {
    flex: 1;
    min-height: 0;
    margin: 2px 3px;
    display: grid;
    grid-template-columns: 19px 1fr 25px;
    grid-template-rows: 19px 1fr 26px;
}

.corner {
    border: 1px solid #333;
    border-right-color: #c22;
}

.ruler-h {
    grid-column: 2 / 4;
    width: 100%;
    height: 19px;
    border-top: 1px solid #333;
    border-bottom: 1px solid #333;
}

.ruler-v {
    grid-row: 2 / 4;
    width: 19px;
    height: 100%;
    border-left: 1px solid #333;
    border-right: 1px solid #333;
}

.ruler-h text, .ruler-v text {
    font-family: "Liberation Sans", sans-serif;
    font-size: 17px;
    fill: #858585;
}

.canvas {
    width: 100%;
    height: 100%;
    background: #fdfefd;
}

.vscroll, .hscroll, .sheet-scroll {
    display: flex;
    background: #ececec;
}

.vscroll {
    flex-direction: column;
    justify-content: space-between;
}

.vscroll button, .hscroll button, .sheet-scroll button {
    width: 25px;
    height: 25px;
    display: flex;
    align-items: center;
    justify-content: center;
}

.vscroll .thumb, .hscroll .thumb, .sheet-scroll .thumb {
    width: 25px;
    height: 25px;
    background: #cbcbcb;
}

.hscroll {
    grid-column: 2 / 4;
    justify-content: space-between;
    padding-right: 28px;
}

.hscroll .thumb {
    width: 48px;
}

/* graph */
.graph-title, .axis-title, .y-labels {
    font-family: Lato, sans-serif;
    fill: #111;
}

.graph-title {
    font-size: 25px;
    text-anchor: middle;
}

.axis-title {
    font-size: 21px;
    text-anchor: middle;
}

.y-labels {
    font-size: 18px;
    text-anchor: end;
}

.x-labels {
    font-family: "Liberation Serif", serif;
    font-size: 20px;
    text-anchor: middle;
}

.grid {
    stroke: #c4c6ca;
    fill: none;
}

.thin, .series {
    fill: none;
    stroke: #6ba2cb;
}

.series {
    stroke: #3f83b6;
}

/* worksheet */
.right {
    width: 334px;
    flex: none;
    display: flex;
    flex-direction: column;
    padding-bottom: 3px;
}

.right .panel-head {
    padding-left: 5px;
}

.sheet-box {
    flex: 1;
    min-height: 0;
    display: flex;
    flex-direction: column;
    padding: 6px 0 2px 6px;
    border: solid #fff;
    border-width: 1px 0 0 1px;
    border-bottom: 1px solid #666;
    background: #f0f0f0;
}

.cell-bar {
    height: 29px;
    flex: none;
    display: flex;
    border: 2px solid #777;
    border-right: 0;
    background: #fff;
    font-family: "Liberation Sans", sans-serif;
    font-size: 20px;
}

.cell-name {
    width: 151px;
    border-right: 2px solid #777;
    text-align: center;
}

.cell-value {
    flex: 1;
    min-width: 0;
    padding-left: 4px;
}

.grid-box {
    flex: 1;
    min-height: 0;
    overflow: hidden;
    border-left: 1px solid #777;
    background: #fff;
}

table {
    table-layout: fixed;
    width: 360px;
    border-collapse: collapse;
}

th {
    height: 31px;
    padding: 0 0 2px;
    border: 1px solid #bccadf;
    background: #e3ebfa;
    font-weight: normal;
    font-size: 19px;
}

th.all {
    width: 40px;
    background: linear-gradient(135deg, transparent 70%, #a9bdd6 70%) right bottom / 20px 20px no-repeat #dde6f5;
}

th.sel {
    background: #1a1109;
    color: #ddd;
}

tbody th, td {
    height: 29px;
}

tbody th {
    background: #dde6f5;
}

td {
    padding: 0 1px;
    border: 1px solid #d2d6db;
    font-family: "Liberation Serif", "Noto Sans CJK SC", serif;
    font-weight: 300;
    font-size: 24px;
    line-height: 24px;
    white-space: nowrap;
}

td.num {
    text-align: right;
}

td.num:last-child {
    padding-right: 7px;
}

td.dark {
    background: #000;
    border-color: #222;
    color: #ddd;
}

td.cell-on {
    border: 2px solid #111;
    padding: 0;
}

.sheet-scroll {
    height: 25px;
    flex: none;
}

.sheet-scroll .thumb {
    width: 204px;
}

.sheet-tabs {
    height: 28px;
    flex: none;
    display: flex;
    gap: 6px;
}

.sheet-tabs button {
    padding: 0 7px 6px;
}

.sheet-tabs .current {
    padding-bottom: 2px;
    background: #fff;
}
```
FILE: app.js
```
const NS = 'http://www.w3.org/2000/svg';

function draw(parent, name, attrs, text) {
    const el = document.createElementNS(NS, name);
    for (const key in attrs) el.setAttribute(key, attrs[key]);
    if (text !== undefined) el.textContent = text;
    parent.appendChild(el);
}

// one inch on the rulers, split in sixteenths
const INCH = 106.6;

function tickLength(i) {
    if (i % 16 === 0) return 20;
    if (i % 8 === 0) return 14;
    if (i % 4 === 0) return 10;
    if (i % 2 === 0) return 6;
    return 3;
}

const rulerH = document.getElementById('rulerH');
for (let i = -10; i <= 170; i++) {
    const x = Math.round(73 + i * INCH / 16) + 0.5;
    draw(rulerH, 'path', { d: `M${x} 18V${18 - tickLength(i)}`, stroke: '#111' });
    if (i >= 0 && i % 16 === 0) {
        draw(rulerH, 'text', { x: x - 2, y: 14, 'text-anchor': 'end' }, i / 16);
    }
}

const rulerV = document.getElementById('rulerV');
for (let i = -13; i <= 110; i++) {
    const y = Math.round(90 + i * INCH / 16) + 0.5;
    draw(rulerV, 'path', { d: `M18 ${y}H${18 - tickLength(i)}`, stroke: '#111' });
    if (i >= 0 && i % 16 === 0) {
        draw(rulerV, 'text', { x: 1, y: y - 4 }, 7 - i / 16);
    }
}
draw(rulerV, 'path', { d: 'M0 95.5H18', stroke: '#c22' });

// symbols on the W series
const points = document.getElementById('points');
const pts = [[0, 237], [58, 160], [116, 230], [174, 275], [232, 166], [291, 122],
    [349, 26], [407, 83], [465, 186], [523, 230], [581, 275], [639, 262]];
pts.forEach(([cx, cy], i) => {
    const ring = i % 2 === 0;
    draw(points, 'circle', { cx, cy, r: 7.5, fill: ring ? '#2d7fcf' : '#1a86ee' });
    if (ring) draw(points, 'circle', { cx, cy, r: 3, fill: '#fff', stroke: '#12325c', 'stroke-width': 1.5 });
});

const handles = document.getElementById('handles');
for (const x of [-6, 319, 644]) {
    for (const y of [19, 150, 280]) {
        if (x === 319 && y === 150) continue;
        draw(handles, 'rect', { x: x - 2.5, y: y - 2.5, width: 6, height: 6, fill: '#3fc13f', stroke: '#123d12' });
    }
}

// worksheet rows
const data = [
    ['点号', '坐标', 'W', 'Pb'],
    ['0号', 360, '0.13', '0.03'],
    ['2号', 380, '0.25', '0.06'],
    ['4号', 400, '0.14', '0.03'],
    ['6号', 420, '0.07', '0.01'],
    ['8号', 440, '0.24', '0.06'],
    ['10号', 460, '0.31', '0.18'],
    ['12号', 480, '0.46', '0.23'],
    ['14号', 500, '0.37', '0.11'],
    ['16号', 520, '0.21', '0.09'],
    ['18号', 540, '0.14', '0.04'],
    ['20号', 560, '0.07', '0.01'],
    ['22号', 580, '0.09', '0.02']
];
const sheet = document.getElementById('sheet');
for (let r = 0; r < 22; r++) {
    const tr = sheet.insertRow();
    const th = document.createElement('th');
    th.textContent = r + 1;
    tr.appendChild(th);
    for (let c = 0; c < 4; c++) {
        const td = tr.insertCell();
        td.textContent = data[r] ? data[r][c] : '';
        if (r > 0 && c > 0) td.classList.add('num');
        if (c === 2) td.classList.add(r > 0 ? 'dark' : 'cell-on');
    }
}
```
